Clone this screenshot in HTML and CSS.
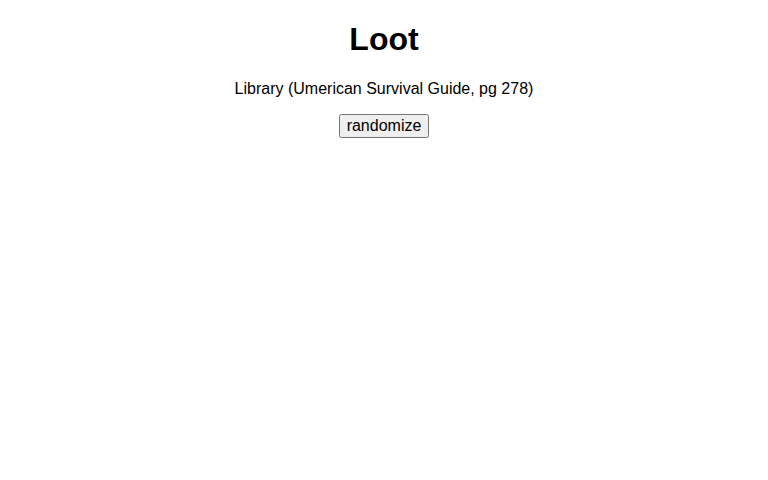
FILE: index.html
```html
<!DOCTYPE html>
<html lang="en">
<head>
    <meta charset="UTF-8">
    <meta name="viewport" content="width=device-width, initial-scale=1.0">
    <title>Loot</title>
    <link rel="stylesheet" href="styles.css">
</head>
<body>
    <div class="loot">
        <h1>Loot</h1>
        <p id="result">Library (Umerican Survival Guide, pg 278)</p>
        <button id="randomize" class="randomize-btn">randomize</button>
    </div>
</body>
</html>
```

FILE: styles.css
```css
body {
    margin: 0;
    font-family: "Liberation Sans", Arial, sans-serif;
    text-align: center;
}
.loot h1 {
    font-size: 32px;
}
.randomize-btn {
    font-family: "Liberation Sans", Arial, sans-serif;
    font-size: 16px;
}
```
